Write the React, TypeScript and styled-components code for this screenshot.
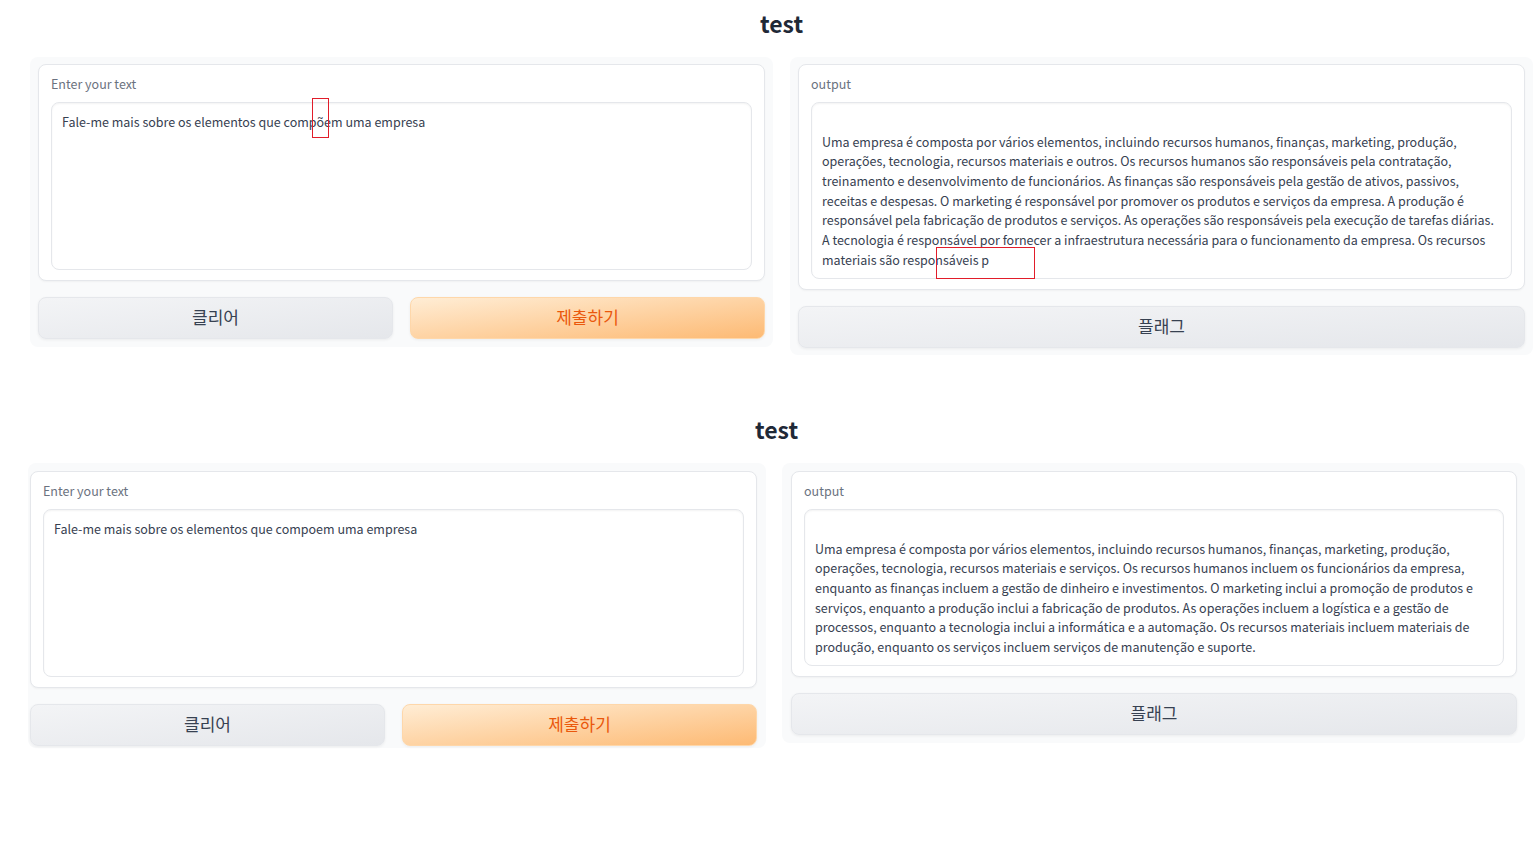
import styled, { createGlobalStyle } from 'styled-components';

const GlobalStyle = createGlobalStyle`
  html, body {
    margin: 0;
    padding: 0;
    background: #ffffff;
  }

  body {
    font-family: "Noto Sans CJK KR", "Noto Sans", sans-serif;
    color: #374151;
  }
`;

const Styled = {
  Page: styled.main`
    display: flex;
    flex-direction: column;
    padding-top: 8px;
  `,

  Section: styled.section<{ $offset: number }>`
    display: flex;
    flex-direction: column;
    margin-left: ${({ $offset }) => $offset}px;
    margin-bottom: 59px;
  `,

  Title: styled.h1<{ $width: number }>`
    width: ${({ $width }) => $width}px;
    margin: 0 0 19px;
    text-align: center;
    font-size: 23px;
    line-height: 30px;
    font-weight: 700;
    color: #1f2937;
  `,

  Row: styled.div<{ $left: number; $right: number; $gap: number }>`
    display: grid;
    grid-template-columns: ${({ $left, $right }) => `${$left}px ${$right}px`};
    column-gap: ${({ $gap }) => $gap}px;
    align-items: start;
  `,

  Column: styled.div<{ $pad: string }>`
    display: flex;
    flex-direction: column;
    gap: 16px;
    padding: ${({ $pad }) => $pad};
    background: #f9fafb;
    border-radius: 8px;
  `,

  Card: styled.div`
    position: relative;
    display: flex;
    flex-direction: column;
    gap: 9px;
    padding: 10px 12px;
    background: #ffffff;
    border: 1px solid #e5e7eb;
    border-radius: 8px;
    box-shadow: 0 1px 2px rgba(0, 0, 0, 0.04);
  `,

  Label: styled.span`
    font-size: 12.5px;
    line-height: 18px;
    color: #6b7280;
  `,

  TextBox: styled.div<{ $height: number }>`
    box-sizing: border-box;
    height: ${({ $height }) => $height}px;
    padding: 9px 10px 10px;
    background: #ffffff;
    border: 1px solid #e5e7eb;
    border-radius: 8px;
    box-shadow: inset 0 1px 2px rgba(0, 0, 0, 0.05);
    font-size: 12.5px;
    line-height: 19.65px;
    color: #374151;
    white-space: pre-wrap;
    overflow: hidden;
  `,

  ButtonRow: styled.div`
    display: grid;
    grid-template-columns: 1fr 1fr;
    gap: 17px;
  `,

  Button: styled.button<{ $primary?: boolean }>`
    height: 42px;
    padding: 0 0 3px;
    border-radius: 8px;
    font-family: "Noto Sans CJK KR", sans-serif;
    font-size: 17px;
    cursor: pointer;
    border: 1px solid ${({ $primary }) => ($primary ? '#fed7aa' : '#e5e7eb')};
    color: ${({ $primary }) => ($primary ? '#ea580c' : '#374151')};
    background: ${({ $primary }) =>
      $primary
        ? 'linear-gradient(to bottom right, #ffedd5, #fdba74)'
        : 'linear-gradient(to bottom right, #f3f4f6, #e5e7eb)'};
    box-shadow: 0 1px 3px rgba(0, 0, 0, 0.06);
  `,

  Marker: styled.span`
    position: absolute;
    border: 1px solid #e11d2a;
    pointer-events: none;
  `,
};

type Mark = { left: number; top: number; width: number; height: number; side: 'in' | 'out' };

type Demo = {
  offset: number;
  titleWidth: number;
  left: number;
  right: number;
  gap: number;
  leftPad: string;
  rightPad: string;
  input: string;
  output: string;
  outputHeight: number;
  markers?: Mark[];
};

const demos: Demo[] = [
  {
    offset: 30,
    titleWidth: 1503,
    left: 743,
    right: 743,
    gap: 17,
    leftPad: '7px 8px 8px 8px',
    rightPad: '7px 8px 7px 8px',
    input: 'Fale-me mais sobre os elementos que compõem uma empresa',
    output:
      '\nUma empresa é composta por vários elementos, incluindo recursos humanos, finanças, marketing, produção, operações, tecnologia, recursos materiais e outros. Os recursos humanos são responsáveis pela contratação, treinamento e desenvolvimento de funcionários. As finanças são responsáveis pela gestão de ativos, passivos, receitas e despesas. O marketing é responsável por promover os produtos e serviços da empresa. A produção é responsável pela fabricação de produtos e serviços. As operações são responsáveis pela execução de tarefas diárias. A tecnologia é responsável por fornecer a infraestrutura necessária para o funcionamento da empresa. Os recursos materiais são responsáveis p',
    outputHeight: 177,
    markers: [
      { left: 273, top: 33, width: 15, height: 38, side: 'in' },
      { left: 137, top: 182, width: 97, height: 30, side: 'out' },
    ],
  },
  {
    offset: 28,
    titleWidth: 1497,
    left: 738,
    right: 743,
    gap: 16,
    leftPad: '8px 9px 2px 2px',
    rightPad: '8px 8px 8px 9px',
    input: 'Fale-me mais sobre os elementos que compoem uma empresa',
    output:
      '\nUma empresa é composta por vários elementos, incluindo recursos humanos, finanças, marketing, produção, operações, tecnologia, recursos materiais e serviços. Os recursos humanos incluem os funcionários da empresa, enquanto as finanças incluem a gestão de dinheiro e investimentos. O marketing inclui a promoção de produtos e serviços, enquanto a produção inclui a fabricação de produtos. As operações incluem a logística e a gestão de processos, enquanto a tecnologia inclui a informática e a automação. Os recursos materiais incluem materiais de produção, enquanto os serviços incluem serviços de manutenção e suporte.',
    outputHeight: 157,
  },
];

function Markers({ marks }: { marks: Mark[] }) {
  return (
    <>
      {marks.map((m) => (
        <Styled.Marker
          key={`${m.left}-${m.top}`}
          style={{ left: m.left, top: m.top, width: m.width, height: m.height }}
        />
      ))}
    </>
  );
}

function DemoSection({ demo }: { demo: Demo }) {
  const marks = demo.markers ?? [];

  return (
    <Styled.Section $offset={demo.offset}>
      <Styled.Title $width={demo.titleWidth}>test</Styled.Title>

      <Styled.Row $left={demo.left} $right={demo.right} $gap={demo.gap}>
        <Styled.Column $pad={demo.leftPad}>
          <Styled.Card>
            <Styled.Label>Enter your text</Styled.Label>
            <Styled.TextBox $height={168}>{demo.input}</Styled.TextBox>
            <Markers marks={marks.filter((m) => m.side === 'in')} />
          </Styled.Card>

          <Styled.ButtonRow>
            <Styled.Button>클리어</Styled.Button>
            <Styled.Button $primary>제출하기</Styled.Button>
          </Styled.ButtonRow>
        </Styled.Column>

        <Styled.Column $pad={demo.rightPad}>
          <Styled.Card>
            <Styled.Label>output</Styled.Label>
            <Styled.TextBox $height={demo.outputHeight}>{demo.output}</Styled.TextBox>
            <Markers marks={marks.filter((m) => m.side === 'out')} />
          </Styled.Card>

          <Styled.Button>플래그</Styled.Button>
        </Styled.Column>
      </Styled.Row>
    </Styled.Section>
  );
}

export default function App() {
  return (
    <>
      <GlobalStyle />
      <Styled.Page>
        {demos.map((demo) => (
          <DemoSection key={demo.offset} demo={demo} />
        ))}
      </Styled.Page>
    </>
  );
}
